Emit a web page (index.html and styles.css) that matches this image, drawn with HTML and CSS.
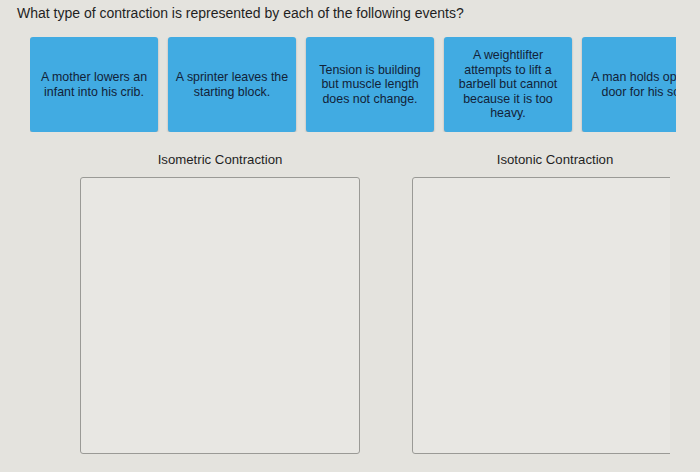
FILE: index.html
```html
<!DOCTYPE html>
<html>

<head>
    <title>Contraction Types</title>
    <meta name="viewport" content="width=device-width, initial-scale=1.0">
    <link rel="stylesheet" href="styles.css">
</head>

<body>
    <main class="quiz">
        <p class="prompt">What type of contraction is represented by each of the following events?</p>

        <div class="bank">
            <div class="card">A mother lowers an infant into his crib.</div>
            <div class="card">A sprinter leaves the starting block.</div>
            <div class="card">Tension is building but muscle length does not change.</div>
            <div class="card">A weightlifter attempts to lift a barbell but cannot because it is too heavy.</div>
            <div class="card">A man holds open a door for his son.</div>
        </div>

        <div class="zones">
            <section class="zone">
                <h3>Isometric Contraction</h3>
                <div class="drop"></div>
            </section>
            <section class="zone">
                <h3>Isotonic Contraction</h3>
                <div class="drop"></div>
            </section>
        </div>
    </main>
</body>

</html>
```

FILE: styles.css
```css
body {
    margin: 0;
    font-family: "Liberation Sans", Arial, sans-serif;
    background-color: #e4e3de;
    color: #222;
}

.quiz {
    width: 700px;
    height: 472px;
    overflow: hidden;
}

.prompt {
    margin: 0;
    padding: 5px 0 0 17px;
    font-size: 14px;
    line-height: 16px;
    color: #1f1f1f;
}

.bank {
    display: flex;
    gap: 10px;
    width: 646px;
    margin: 16px 0 0 30px;
    overflow: hidden;
}

.card {
    flex: 0 0 128px;
    height: 95px;
    box-sizing: border-box;
    padding: 0 6px;
    display: flex;
    align-items: center;
    justify-content: center;
    text-align: center;
    background-color: #41abe2;
    border-radius: 3px;
    box-shadow: 0 1px 2px rgba(0, 0, 0, .25);
    color: #122238;
    font-size: 12.4px;
    line-height: 14.5px;
}

.zones {
    display: flex;
    gap: 52px;
    width: 590px;
    margin: 20px 0 0 80px;
    overflow: hidden;
}

.zone {
    flex: 0 0 280px;
}

.zone h3 {
    margin: 0 0 9px 0;
    text-align: center;
    font-weight: normal;
    font-size: 13.2px;
    line-height: 16px;
    color: #1f1f1f;
}

.zone:last-child h3 {
    padding-left: 6px;
}

.drop {
    height: 275px;
    border: 1px solid #9a9a96;
    border-radius: 3px;
    background-color: #e8e7e3;
}
```
